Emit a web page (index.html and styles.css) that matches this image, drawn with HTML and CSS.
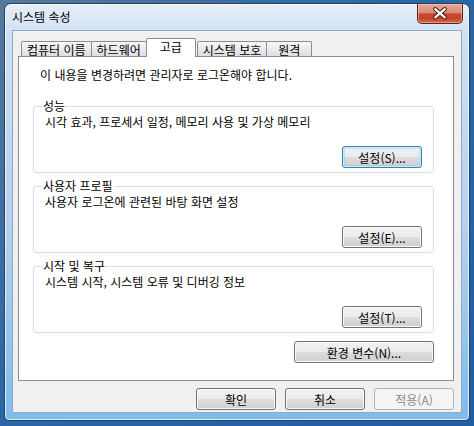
FILE: index.html
```html
<!DOCTYPE html>
<html lang="ko">
<head>
    <meta charset="UTF-8">
    <title>시스템 속성</title>
    <link rel="stylesheet" href="styles.css">
</head>
<body>

<div class="window">
    <div class="titlebar">
        <span class="title">시스템 속성</span>
        <button class="close" title="닫기">
            <svg width="46" height="19" viewBox="0 0 46 19">
                <path d="M18 5 L28 13.5 M28 5 L18 13.5" stroke="#4a1b12" stroke-width="4.4" stroke-linecap="round"/>
                <path d="M18 5 L28 13.5 M28 5 L18 13.5" stroke="#fff" stroke-width="2.3" stroke-linecap="round"/>
            </svg>
        </button>
    </div>

    <div class="client">
        <div class="tabs">
            <div class="tab">컴퓨터 이름</div>
            <div class="tab">하드웨어</div>
            <div class="tab active">고급</div>
            <div class="tab">시스템 보호</div>
            <div class="tab">원격</div>
        </div>

        <div class="panel">
            <p class="notice">이 내용을 변경하려면 관리자로 로그온해야 합니다.</p>

            <fieldset class="group">
                <legend>성능</legend>
                <p class="desc">시각 효과, 프로세서 일정, 메모리 사용 및 가상 메모리</p>
                <div class="actions">
                    <button class="btn focused">설정(S)...</button>
                </div>
            </fieldset>

            <fieldset class="group">
                <legend>사용자 프로필</legend>
                <p class="desc">사용자 로그온에 관련된 바탕 화면 설정</p>
                <div class="actions">
                    <button class="btn">설정(E)...</button>
                </div>
            </fieldset>

            <fieldset class="group">
                <legend>시작 및 복구</legend>
                <p class="desc">시스템 시작, 시스템 오류 및 디버깅 정보</p>
                <div class="actions">
                    <button class="btn">설정(T)...</button>
                </div>
            </fieldset>

            <div class="actions env">
                <button class="btn wide">환경 변수(N)...</button>
            </div>
        </div>

        <div class="footer">
            <button class="btn">확인</button>
            <button class="btn">취소</button>
            <button class="btn" disabled>적용(A)</button>
        </div>
    </div>
</div>

</body>
</html>
```

FILE: styles.css
```css
* {
    margin: 0;
    padding: 0;
    box-sizing: border-box;
}

body {
    width: 474px;
    height: 426px;
    overflow: hidden;
    background: linear-gradient(135deg, #55799c 0%, #2a67a6 45%, #1d5ea8 100%);
    font-family: "Noto Sans CJK KR", "Noto Sans", sans-serif;
    font-size: 12px;
    line-height: 14px;
    color: #000;
}

.window {
    margin: 3px 0 0 4px;
    width: 466px;
    height: 418px;
    padding: 0 7px 7px;
    border: 1px solid #23415f;
    border-radius: 7px 7px 5px 5px;
    background: linear-gradient(to bottom, #e6eff9 0%, #cfe0f2 30px, #b3d0ee 55%, #7dbcec 100%);
    box-shadow: inset 0 0 0 1px rgba(255, 255, 255, 0.75);
}

.titlebar {
    height: 26px;
    display: flex;
    justify-content: space-between;
    align-items: flex-start;
}

.title {
    padding-top: 6px;
    color: #000;
}

.close {
    width: 46px;
    height: 20px;
    margin-right: -1px;
    border: 1px solid #5e2117;
    border-top: none;
    border-radius: 0 0 5px 5px;
    background: linear-gradient(to bottom, #e9a896 0%, #dc8b76 45%, #c54a30 52%, #c3432a 75%, #d8684d 100%);
    box-shadow: inset 0 0 0 1px rgba(255, 220, 210, 0.45);
    display: flex;
    align-items: center;
    justify-content: center;
}

.close svg {
    display: block;
}

.client {
    height: 383px;
    background-color: #f0f0f0;
    border: 1px solid #8fa9c4;
}

/* tabs */

.tabs {
    height: 25px;
    display: flex;
    align-items: flex-end;
    padding-left: 8px;
}

.tab {
    height: 15px;
    min-width: 46px;
    padding: 1px 5px 0;
    margin-right: -1px;
    border: 1px solid #898c95;
    border-bottom: none;
    border-radius: 2px 2px 0 0;
    background: linear-gradient(to bottom, #f6f6f6 0%, #ebebeb 50%, #dedede 100%);
    display: flex;
    align-items: center;
    justify-content: center;
    white-space: nowrap;
}

.tab.active {
    position: relative;
    z-index: 1;
    height: 19px;
    min-width: 50px;
    margin: 0 1px -1px 0;
    padding-bottom: 3px;
    background: #fff;
}

.panel {
    width: 436px;
    height: 325px;
    margin-left: 5px;
    padding: 11px 19px 0 14px;
    background-color: #fff;
    border: 1px solid #898c95;
}

.notice {
    margin-left: 7px;
    margin-bottom: 17px;
}

/* group boxes */

.group {
    width: 401px;
    height: 74px;
    margin-bottom: 6px;
    padding: 0 11px 0 8px;
    border: 1px solid #d5dfe5;
    border-radius: 3px;
}

.group legend {
    padding: 0 1px;
    line-height: 14px;
}

.desc {
    margin-top: 2px;
    padding-left: 3px;
}

.actions {
    display: flex;
    justify-content: flex-end;
    margin-top: 17px;
}

.actions.env {
    margin-top: 8px;
}

/* buttons */

.btn {
    width: 80px;
    height: 22px;
    font-family: inherit;
    font-size: 12px;
    color: #000;
    border: 1px solid #707070;
    border-radius: 3px;
    background: linear-gradient(to bottom, #f2f2f2 0%, #ebebeb 50%, #dddddd 51%, #cfcfcf 100%);
    box-shadow: inset 0 0 0 1px #fbfbfb;
}

.btn.wide {
    width: 140px;
}

.btn.focused {
    border-color: #3c7fb1;
    box-shadow: inset 0 0 0 1px #c8ecfb, inset 0 0 0 2px rgba(120, 200, 240, 0.35);
}

.btn:disabled {
    color: #8a8a8a;
    border-color: #adb2b5;
    background: #f4f4f4;
    box-shadow: none;
}

.footer {
    width: 441px;
    margin-top: 7px;
    display: flex;
    justify-content: flex-end;
    gap: 9px;
}
```
